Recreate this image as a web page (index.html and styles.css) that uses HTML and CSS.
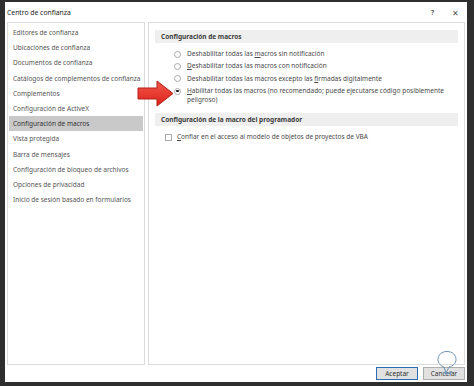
FILE: index.html
```html
<!DOCTYPE html>
<html lang="es">
<head>
    <meta charset="UTF-8">
    <meta name="viewport" content="width=device-width, initial-scale=1.0">
    <title>Centro de confianza</title>
    <link rel="stylesheet" href="styles.css">
</head>
<body>

<div class="dialog">
    <div class="titlebar">
        <span class="title">Centro de confianza</span>
        <span class="title-btn help">?</span>
        <span class="title-btn close">✕</span>
    </div>

    <div class="content">
        <ul class="nav">
            <li>Editores de confianza</li>
            <li>Ubicaciones de confianza</li>
            <li>Documentos de confianza</li>
            <li>Catálogos de complementos de confianza</li>
            <li>Complementos</li>
            <li>Configuración de ActiveX</li>
            <li class="selected">Configuración de macros</li>
            <li>Vista protegida</li>
            <li>Barra de mensajes</li>
            <li>Configuración de bloqueo de archivos</li>
            <li>Opciones de privacidad</li>
            <li>Inicio de sesión basado en formularios</li>
        </ul>

        <div class="panel">
            <div class="section-head">Configuración de macros</div>
            <div class="options">
                <div class="option"><span class="radio"></span><span>Deshabilitar todas las <u>m</u>acros sin notificación</span></div>
                <div class="option"><span class="radio"></span><span><u>D</u>eshabilitar todas las macros con notificación</span></div>
                <div class="option"><span class="radio"></span><span>Deshabilitar todas las macros excepto las <u>f</u>irmadas digitalmente</span></div>
                <div class="option"><span class="radio checked"></span><span><u>H</u>abilitar todas las macros (no recomendado; puede ejecutarse código posiblemente<br>peligroso)</span></div>
            </div>
            <div class="section-head">Configuración de la macro del programador</div>
            <div class="options check-list">
                <div class="option"><span class="checkbox"></span><span><u>C</u>onfiar en el acceso al modelo de objetos de proyectos de VBA</span></div>
            </div>
        </div>
    </div>

    <div class="footer">
        <button class="btn default">Aceptar</button>
        <button class="btn">Cancelar</button>
    </div>

    <svg class="arrow" width="38" height="27" viewBox="0 0 38 27">
        <defs>
            <linearGradient id="red" x1="0" y1="0" x2="0" y2="1">
                <stop offset="0" stop-color="#f5564a"/>
                <stop offset="1" stop-color="#d9231b"/>
            </linearGradient>
        </defs>
        <path d="M1 8 H20 V1 L36 13.5 L20 26 V19 H1 Z" fill="url(#red)" stroke="#b3201a" stroke-width="1" stroke-linejoin="round"/>
    </svg>

    <svg class="mark" width="24" height="26" viewBox="0 0 24 26">
        <path d="M12 1.5 C6.5 1.5 3 5 3 9.5 C3 13.5 6 16 9 17 L11 23 L14 17 C18 16 21 13.5 21 9.5 C21 5 17.5 1.5 12 1.5 Z" fill="none" stroke="#6f95b8" stroke-width="1"/>
        <path d="M9 22 C11 24.5 15 24 17 21.5" fill="none" stroke="#6f95b8" stroke-width="1.4"/>
    </svg>
</div>

</body>
</html>
```

FILE: styles.css
```css
body {
    margin: 0;
    width: 474px;
    height: 386px;
    background: #2e2e2e;
    font-family: "Noto Sans", "Open Sans", sans-serif;
    font-size: 6.5px;
    color: #4a4a4a;
    overflow: hidden;
}
.dialog {
    position: relative;
    margin: 2px 0 0 5px;
    width: 462px;
    height: 380px;
    background: #fff;
    display: flex;
    flex-direction: column;
}
.titlebar {
    height: 20px;
    display: flex;
    align-items: center;
    padding: 0 0 0 2px;
}
.title {
    flex: 1;
    color: #222;
    font-size: 6.8px;
}
.title-btn {
    color: #555;
    font-size: 7px;
}
.help { margin-right: 18px; font-weight: bold; font-size: 6.5px; }
.close { margin-right: 8px; font-size: 8px; }
.content {
    display: flex;
    gap: 3px;
    padding: 0 2px;
    height: 343px;
}
.nav {
    list-style: none;
    margin: 0;
    padding: 2px 0 0 0;
    width: 136px;
    border: 1px solid #dcdcdc;
}
.nav li {
    height: 15.2px;
    line-height: 15.2px;
    margin: 0 1px 0 1px;
    padding-left: 4px;
    color: #555;
    white-space: nowrap;
}
.nav li.selected {
    background: #c9c9c9;
    color: #333;
}
.panel {
    flex: 1;
    border: 1px solid #dcdcdc;
    padding: 7px 6px 0 6px;
}
.section-head {
    height: 13px;
    line-height: 13px;
    background: #efefef;
    padding-left: 6px;
    font-weight: bold;
    color: #3c3c3c;
}
.options {
    padding: 6px 0 9px 19px;
}
.option {
    display: flex;
    gap: 6px;
    line-height: 9px;
    margin-bottom: 3.4px;
    white-space: nowrap;
}
.option:last-child { margin-bottom: 0; }
.radio {
    flex: none;
    width: 5px;
    height: 5px;
    margin-top: 1.5px;
    border: 0.6px solid #aaa;
    border-radius: 50%;
    position: relative;
}
.radio.checked::after {
    content: "";
    position: absolute;
    left: 1.3px;
    top: 1.3px;
    width: 2.4px;
    height: 2.4px;
    border-radius: 50%;
    background: #111;
}
.check-list {
    padding-left: 10px;
}
.check-list .option { gap: 5px; }
.checkbox {
    flex: none;
    width: 5px;
    height: 5px;
    margin-top: 1.5px;
    border: 0.6px solid #aaa;
}
.footer {
    flex: 1;
    display: flex;
    justify-content: flex-end;
    align-items: center;
    gap: 5px;
    padding: 0 2px 0 0;
}
.btn {
    width: 42px;
    height: 13px;
    padding: 0;
    font-family: inherit;
    font-size: 6.5px;
    color: #333;
    background: #e1e1e1;
    border: 1px solid #adadad;
}
.btn.default {
    border: 1.5px solid #2b6db5;
}
.arrow {
    position: absolute;
    left: 132px;
    top: 78px;
}
.mark {
    position: absolute;
    left: 430px;
    top: 348px;
}
```
